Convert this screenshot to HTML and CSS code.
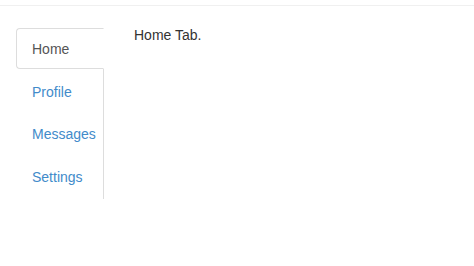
FILE: index.html
```html
<!DOCTYPE html>
<html>
<head>
<meta charset="utf-8">
<link rel="stylesheet" href="styles.css">
</head>
<body>
<div class="topbar"></div>
<div class="tabs">
  <ul class="nav-left">
    <li class="active"><a href="#">Home</a></li>
    <li><a href="#">Profile</a></li>
    <li><a href="#">Messages</a></li>
    <li><a href="#">Settings</a></li>
  </ul>
  <div class="pane">Home Tab.</div>
</div>
</body>
</html>
```
FILE: styles.css
```css
html, body {
  margin: 0;
  padding: 0;
  background: #fff;
  font-family: "Liberation Sans", Arial, sans-serif;
  font-size: 14px;
  color: #333;
}
.topbar {
  height: 5px;
  border-bottom: 1px solid #f0f0f0;
}
.tabs {
  display: flex;
  align-items: flex-start;
  padding: 22px 0 0 16px;
}
.nav-left {
  list-style: none;
  margin: 0;
  padding: 0;
  width: 87px;
  border-right: 1px solid #ddd;
}
.nav-left li {
  margin: 0 -1px 2px 0;
}
.nav-left a {
  display: block;
  padding: 10px 15px 8px;
  line-height: 20.67px;
  border: 1px solid transparent;
  border-radius: 4px 0 0 4px;
  color: #428bca;
  text-decoration: none;
}
.nav-left li.active a {
  color: #555;
  background: #fff;
  border-color: #ddd transparent #ddd #ddd;
}
.pane {
  margin-left: 30px;
  line-height: 14px;
}
```
